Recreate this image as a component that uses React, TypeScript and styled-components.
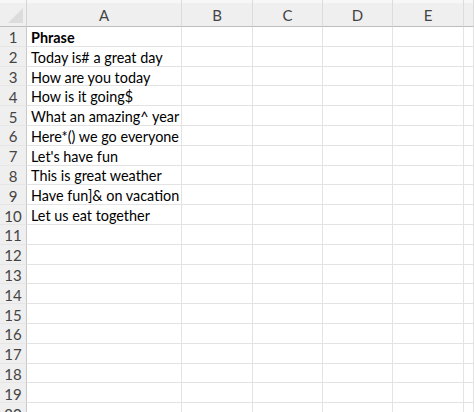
import React from "react";
import styled, { createGlobalStyle } from "styled-components";

const Global = createGlobalStyle`
  html, body { margin: 0; padding: 0; background: #ffffff; }
  body { font-family: "Lato", "Open Sans", sans-serif; }
`;

const COLS = ["A", "B", "C", "D", "E", ""];
const WIDTHS = "27px 155px 71px 70px 70px 71px 10px";

const Sheet = styled.div`
  display: grid;
  grid-template-columns: ${WIDTHS};
  grid-auto-rows: 19.8px;
  grid-template-rows: 27px;
  width: 474px;
  height: 412px;
  overflow: hidden;
`;

const Corner = styled.div`
  background: linear-gradient(#f7f7f7 0 3px, #efefef 3px);
  border-right: 1px solid #d4d4d4;
  border-bottom: 1px solid #bdbdbd;
  box-sizing: border-box;
  position: relative;
  &::after {
    content: "";
    position: absolute;
    right: 3px;
    bottom: 3px;
    width: 0;
    height: 0;
    border-left: 15px solid transparent;
    border-bottom: 15px solid #dcdcdc;
  }
`;

const ColHead = styled.div`
  background: linear-gradient(#f7f7f7 0 3px, #efefef 3px);
  border-right: 1px solid #dcdcdc;
  border-bottom: 1px solid #bdbdbd;
  box-sizing: border-box;
  display: flex;
  align-items: flex-end;
  justify-content: center;
  padding-bottom: 2px;
  font-size: 15px;
  color: #444;
`;

const RowHead = styled.div`
  background: #efefef;
  border-right: 1px solid #c9c9c9;
  border-bottom: 1px solid #e6e6e6;
  box-sizing: border-box;
  display: flex;
  align-items: center;
  justify-content: center;
  padding-top: 2px;
  font-size: 15px;
  color: #444;
`;

const Cell = styled.div<{ $bold?: boolean }>`
  border-right: 1px solid #e3e3e3;
  border-bottom: 1px solid #e3e3e3;
  box-sizing: border-box;
  display: flex;
  align-items: center;
  padding-left: 4px;
  padding-top: 2px;
  font-size: 14.4px;
  font-weight: ${(p) => (p.$bold ? 700 : 400)};
  color: #000;
  white-space: nowrap;
  overflow: visible;
`;

const data = [
  "Phrase",
  "Today is# a great day",
  "How are you today",
  "How is it going$",
  "What an amazing^ year",
  "Here*() we go everyone",
  "Let's have fun",
  "This is great weather",
  "Have fun]& on vacation",
  "Let us eat together",
];

export default function App() {
  const rows = Array.from({ length: 20 }, (_, i) => i + 1);
  return (
    <>
      <Global />
      <Sheet>
        <Corner />
        {COLS.map((c, i) => (
          <ColHead key={i}>{c}</ColHead>
        ))}
        {rows.map((r) => (
          <React.Fragment key={r}>
            <RowHead>{r}</RowHead>
            {COLS.map((_, ci) => (
              <Cell key={ci} $bold={r === 1 && ci === 0}>
                {ci === 0 ? data[r - 1] ?? "" : ""}
              </Cell>
            ))}
          </React.Fragment>
        ))}
      </Sheet>
    </>
  );
}
